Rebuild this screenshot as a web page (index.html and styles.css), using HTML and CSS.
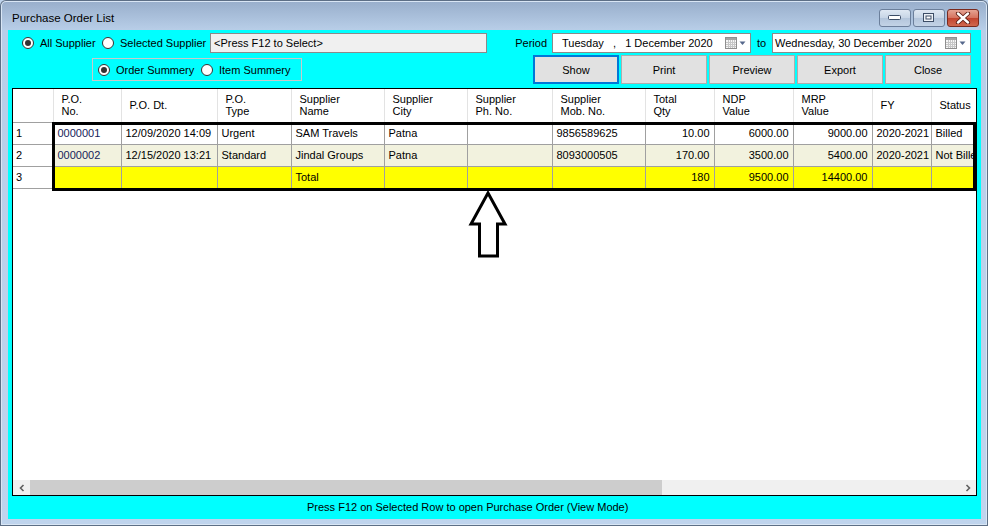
FILE: index.html
```html
<!DOCTYPE html>
<html>
<head>
<meta charset="utf-8">
<title>Purchase Order List</title>
<link rel="stylesheet" href="styles.css">
</head>
<body>
<div class="window">
  <div class="titlebar">
    <div class="title">Purchase Order List</div>
    <div class="caption-buttons">
      <div class="cbtn">
        <svg width="14" height="6" viewBox="0 0 14 6"><rect x="0.5" y="0.5" width="12" height="4" rx="1" fill="#fff" stroke="#3c4d66"/></svg>
      </div>
      <div class="cbtn">
        <svg width="12" height="10" viewBox="0 0 12 10"><rect x="0.5" y="0.5" width="10" height="8" fill="#eef2f7" stroke="#3c4d66"/><rect x="3" y="3" width="5" height="3" fill="#fff" stroke="#3c4d66" stroke-width="1"/></svg>
      </div>
      <div class="cbtn close">
        <svg width="16" height="12" viewBox="0 0 16 12"><path d="M3 1.5L13 10.5M13 1.5L3 10.5" stroke="#5a1a10" stroke-width="4.2" stroke-linecap="round"/><path d="M3 1.5L13 10.5M13 1.5L3 10.5" stroke="#fff" stroke-width="2.4" stroke-linecap="round"/></svg>
      </div>
    </div>
  </div>

  <div class="client">
    <div class="row row1">
      <label class="radio w80"><span class="circle checked"></span><span>All Supplier</span></label>
      <label class="radio w108"><span class="circle"></span><span>Selected Supplier</span></label>
      <div class="textbox">&lt;Press F12 to Select&gt;</div>
      <div class="period">Period</div>
      <div class="datepicker">
        <span class="dtext">Tuesday   ,   1 December 2020</span>
        <svg class="cal" width="21" height="12" viewBox="0 0 21 12"><rect x="0.5" y="0.5" width="11" height="11" fill="#f6f6f6" stroke="#8e8e8e"/><rect x="1" y="1" width="10" height="2" fill="#a4a4a4"/><path d="M1 5.5h10M1 7.5h10M1 9.5h10M3.5 3v8M5.5 3v8M7.5 3v8M9.5 3v8" stroke="#c6c6c6"/><path d="M14.5 4.5h6l-3 3.5z" fill="#56688c"/></svg>
      </div>
      <div class="to">to</div>
      <div class="datepicker">
        <span class="dtext tight">Wednesday, 30 December 2020</span>
        <svg class="cal" width="21" height="12" viewBox="0 0 21 12"><rect x="0.5" y="0.5" width="11" height="11" fill="#f6f6f6" stroke="#8e8e8e"/><rect x="1" y="1" width="10" height="2" fill="#a4a4a4"/><path d="M1 5.5h10M1 7.5h10M1 9.5h10M3.5 3v8M5.5 3v8M7.5 3v8M9.5 3v8" stroke="#c6c6c6"/><path d="M14.5 4.5h6l-3 3.5z" fill="#56688c"/></svg>
      </div>
    </div>

    <div class="row row2">
      <div class="groupbox">
        <label class="radio w103"><span class="circle checked"></span><span>Order Summery</span></label>
        <label class="radio"><span class="circle"></span><span>Item Summery</span></label>
      </div>
      <div class="buttons">
        <button class="btn focused">Show</button>
        <button class="btn">Print</button>
        <button class="btn">Preview</button>
        <button class="btn">Export</button>
        <button class="btn">Close</button>
      </div>
    </div>

    <div class="grid">
      <div class="grid-body">
        <table class="table">
          <colgroup>
            <col class="c-rh"><col class="c-no"><col class="c-dt"><col class="c-type"><col class="c-name"><col class="c-city"><col class="c-ph"><col class="c-mob"><col class="c-qty"><col class="c-ndp"><col class="c-mrp"><col class="c-fy"><col class="c-st">
          </colgroup>
          <thead>
            <tr>
              <th></th>
              <th>P.O.<br>No.</th>
              <th>P.O. Dt.</th>
              <th>P.O.<br>Type</th>
              <th>Supplier<br>Name</th>
              <th>Supplier<br>City</th>
              <th>Supplier<br>Ph. No.</th>
              <th>Supplier<br>Mob. No.</th>
              <th>Total<br>Qty</th>
              <th>NDP<br>Value</th>
              <th>MRP<br>Value</th>
              <th>FY</th>
              <th>Status</th>
            </tr>
          </thead>
          <tbody>
            <tr class="r-white">
              <td class="rh">1</td>
              <td class="pono">0000001</td>
              <td>12/09/2020 14:09</td>
              <td>Urgent</td>
              <td>SAM Travels</td>
              <td>Patna</td>
              <td></td>
              <td>9856589625</td>
              <td class="num">10.00</td>
              <td class="num">6000.00</td>
              <td class="num">9000.00</td>
              <td>2020-2021</td>
              <td>Billed</td>
            </tr>
            <tr class="r-beige">
              <td class="rh">2</td>
              <td class="pono">0000002</td>
              <td>12/15/2020 13:21</td>
              <td>Standard</td>
              <td>Jindal Groups</td>
              <td>Patna</td>
              <td></td>
              <td>8093000505</td>
              <td class="num">170.00</td>
              <td class="num">3500.00</td>
              <td class="num">5400.00</td>
              <td>2020-2021</td>
              <td>Not Billed</td>
            </tr>
            <tr class="r-yellow">
              <td class="rh">3</td>
              <td></td>
              <td></td>
              <td></td>
              <td>Total</td>
              <td></td>
              <td></td>
              <td></td>
              <td class="num">180</td>
              <td class="num">9500.00</td>
              <td class="num">14400.00</td>
              <td></td>
              <td></td>
            </tr>
          </tbody>
        </table>
        <div class="highlight"></div>
        <svg class="uparrow" width="40" height="70" viewBox="0 0 40 70"><polygon points="20,3 37,34 29.5,34 29.5,66 11.5,66 11.5,34 3,34" fill="#fff" stroke="#000" stroke-width="3" stroke-linejoin="miter"/></svg>
      </div>
      <div class="hscroll">
        <div class="sarrow"><svg width="8" height="8" viewBox="0 0 8 8"><path d="M5.5 1L2.5 4l3 3" fill="none" stroke="#606060" stroke-width="1.6"/></svg></div>
        <div class="thumb"></div>
        <div class="track"></div>
        <div class="sarrow"><svg width="8" height="8" viewBox="0 0 8 8"><path d="M2.5 1l3 3-3 3" fill="none" stroke="#606060" stroke-width="1.6"/></svg></div>
      </div>
    </div>

    <div class="status">Press F12 on Selected Row to open Purchase Order (View Mode)</div>
  </div>
</div>
</body>
</html>
```

FILE: styles.css
```css
* { box-sizing: border-box; }

html, body {
  margin: 0;
  padding: 0;
  width: 988px;
  height: 526px;
  overflow: hidden;
  background: #bfd4ed;
  font-family: "Liberation Sans", Arial, sans-serif;
  font-size: 11px;
  color: #000;
}

.window {
  width: 988px;
  height: 526px;
  border-radius: 6px 6px 0 0;
  background: linear-gradient(to bottom, #97adca 0px, #b8cee8 30px, #bfd4ed 100%);
  box-shadow: inset 0 0 0 1px #5d6f86, inset 0 0 0 2px #d9e6f5;
  display: flex;
  flex-direction: column;
}

.titlebar {
  height: 30px;
  display: flex;
  align-items: flex-start;
  justify-content: space-between;
  padding: 0 9px 0 12px;
}

.title {
  font-size: 11.5px;
  line-height: 13px;
  padding-top: 12px;
  color: #000;
}

.caption-buttons {
  display: flex;
  gap: 2px;
  margin-top: 9px;
}

.cbtn {
  width: 32px;
  height: 18px;
  border: 1px solid #6b7f9b;
  border-radius: 3px;
  background: linear-gradient(to bottom, #dfe8f3 0%, #c7d5e6 50%, #b3c5db 51%, #c3d3e6 100%);
  display: flex;
  align-items: center;
  justify-content: center;
}

.cbtn.close {
  border-color: #7a2a1e;
  background: linear-gradient(to bottom, #e5a393 0%, #d5715d 50%, #c2432e 51%, #d0684f 100%);
}

.client {
  flex: 1;
  margin: 0 7px 7px 8px;
  background: #00ffff;
  display: flex;
  flex-direction: column;
}

.row {
  display: flex;
  align-items: center;
  padding-right: 10px;
}

.row1 {
  height: 20px;
  margin-top: 3px;
  padding-left: 14px;
}

.row2 {
  height: 29px;
  margin-top: 2px;
  align-items: flex-start;
}

.radio {
  display: flex;
  align-items: center;
  gap: 6px;
  white-space: nowrap;
}

.w80 { width: 80px; }
.w108 { width: 108px; }
.w103 { width: 103px; }

.circle {
  width: 12px;
  height: 12px;
  border-radius: 50%;
  border: 1px solid #333;
  background: #fff;
  position: relative;
  flex: none;
}

.circle.checked::after {
  content: "";
  position: absolute;
  left: 2px;
  top: 2px;
  width: 6px;
  height: 6px;
  border-radius: 50%;
  background: #333;
}

.textbox {
  width: 277px;
  height: 20px;
  background: #f0f0f0;
  border: 1px solid #8a8a8a;
  padding-left: 3px;
  line-height: 18px;
  white-space: nowrap;
}

.period {
  margin-left: auto;
  padding-right: 5px;
  line-height: 20px;
}

.datepicker {
  width: 199px;
  height: 20px;
  background: #fff;
  border: 1px solid #8a8a8a;
  display: flex;
  align-items: center;
  padding: 0 4px 0 9px;
}

.datepicker .dtext {
  flex: 1;
  white-space: pre;
}

.datepicker .dtext.tight {
  margin-left: -7px;
}

.cal { flex: none; }

.to {
  width: 21px;
  padding-left: 6px;
  line-height: 20px;
}

.groupbox {
  margin-left: 84px;
  margin-top: 3px;
  width: 210px;
  height: 23px;
  border: 1px solid #c9c9c9;
  display: flex;
  align-items: center;
  padding-left: 5px;
}

.buttons {
  margin-left: auto;
  display: flex;
  gap: 2px;
}

.btn {
  width: 86px;
  height: 29px;
  background: #e1e1e1;
  border: 1px solid #adadad;
  font-family: "Liberation Sans", Arial, sans-serif;
  font-size: 11px;
  color: #000;
  padding: 0;
  margin: 0;
}

.btn.focused {
  border: 2px solid #0078d7;
}

.grid {
  margin: 4px 0 0 4px;
  width: 965px;
  height: 408px;
  border: 1px solid #000;
  background: #fff;
  display: flex;
  flex-direction: column;
}

.grid-body {
  flex: 1;
  position: relative;
  overflow: hidden;
}

.table {
  table-layout: fixed;
  border-collapse: collapse;
  width: 978px;
}

.c-rh { width: 40px; }
.c-no { width: 68px; }
.c-dt { width: 96px; }
.c-type { width: 74px; }
.c-name { width: 93px; }
.c-city { width: 83px; }
.c-ph { width: 85px; }
.c-mob { width: 93px; }
.c-qty { width: 69px; }
.c-ndp { width: 79px; }
.c-mrp { width: 79px; }
.c-fy { width: 59px; }
.c-st { width: 60px; }

.table th {
  height: 33px;
  padding: 0 0 0 8px;
  font-weight: normal;
  text-align: left;
  vertical-align: middle;
  line-height: 12px;
  border-right: 1px solid #e3e3e3;
  border-bottom: 1px solid #a0a0a0;
  white-space: nowrap;
  overflow: hidden;
}

.table td {
  height: 22px;
  padding: 0 4px;
  border: 1px solid #a0a0a0;
  border-top: none;
  white-space: nowrap;
  overflow: hidden;
  line-height: 20px;
}

.table td:first-child {
  border-left: none;
}

.table td.rh {
  background: #fff;
  padding-left: 3px;
}

.table td.num { text-align: right; }

.table td.pono { color: #15225a; }

.r-white td { background: #fff; }
.r-beige td { background: #f2f2de; }
.r-yellow td { background: #ffff00; }

.highlight {
  position: absolute;
  left: 39px;
  top: 33px;
  width: 924px;
  height: 69px;
  border: 3px solid #000;
  pointer-events: none;
}

.uparrow {
  position: absolute;
  left: 455px;
  top: 101px;
}

.hscroll {
  height: 15px;
  display: flex;
  background: #f0f0f0;
  flex: none;
}

.sarrow {
  width: 17px;
  display: flex;
  align-items: center;
  justify-content: center;
}

.thumb {
  width: 632px;
  background: #cdcdcd;
}

.track {
  flex: 1;
}

.status {
  height: 23px;
  line-height: 23px;
  padding-left: 299px;
  white-space: nowrap;
}
```
